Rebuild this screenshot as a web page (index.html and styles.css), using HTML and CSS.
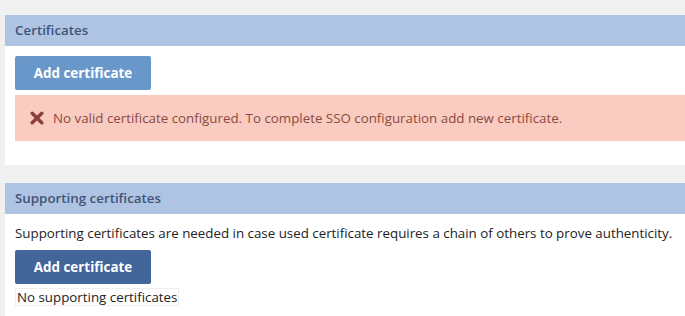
FILE: index.html
```html
<!DOCTYPE html>
<html>
<head>
<meta charset="utf-8">
<link rel="stylesheet" href="styles.css">
</head>
<body>
<div class="page">
  <section class="panel">
    <div class="panel-head">Certificates</div>
    <div class="panel-body first">
      <button class="btn btn-light">Add certificate</button>
      <div class="alert">
        <svg class="alert-icon" width="14" height="14" viewBox="0 0 14 14"><path d="M2.2 2.2 L11.8 11.8 M11.8 2.2 L2.2 11.8" stroke="#8c3f3f" stroke-width="3.4" stroke-linecap="round"/></svg>
        <span>No valid certificate configured. To complete SSO configuration add new certificate.</span>
      </div>
    </div>
  </section>
  <section class="panel">
    <div class="panel-head">Supporting certificates</div>
    <div class="panel-body second">
      <p class="desc">Supporting certificates are needed in case used certificate requires a chain of others to prove authenticity.</p>
      <button class="btn btn-dark">Add certificate</button>
      <div class="empty">No supporting certificates</div>
    </div>
  </section>
</div>
</body>
</html>
```
FILE: styles.css
```css
html, body {
  margin: 0;
  padding: 0;
  background: #f0f0f0;
  font-family: "Open Sans", "Liberation Sans", sans-serif;
  font-size: 13.33px;
  color: #222;
}
.page {
  padding: 15px 0 0 5px;
  display: flex;
  flex-direction: column;
  gap: 18px;
}
.panel {
  background: #fff;
}
.panel-head {
  background: #aec4e2;
  height: 31px;
  line-height: 31px;
  padding-left: 10px;
  font-weight: 600;
  font-size: 13.33px;
  color: #3f5478;
}
.panel-body {
  padding: 10px 0 0 10px;
  display: flex;
  flex-direction: column;
  align-items: flex-start;
}
.panel-body.first {
  padding-bottom: 24px;
}
.btn {
  border: none;
  border-radius: 2px;
  height: 34px;
  width: 136px;
  color: #fff;
  font-family: "Open Sans", "Liberation Sans", sans-serif;
  font-weight: 700;
  font-size: 13.4px;
  padding: 0;
}
.btn-light { background: #6a97c9; }
.btn-dark { background: #42659a; }
.alert {
  margin-top: 5px;
  align-self: stretch;
  background: #f9cbc1;
  height: 46px;
  display: flex;
  align-items: center;
  padding-left: 15px;
  gap: 9px;
  color: #8a4b3e;
}
.alert-icon { flex: none; }
.desc {
  margin: 0 0 8px;
  line-height: 18px;
  color: #222;
}
.empty {
  margin-top: 4px;
  border: 1px solid #eeeeee;
  padding: 0 1px;
  line-height: 16px;
  margin-bottom: 20px;
}
```
